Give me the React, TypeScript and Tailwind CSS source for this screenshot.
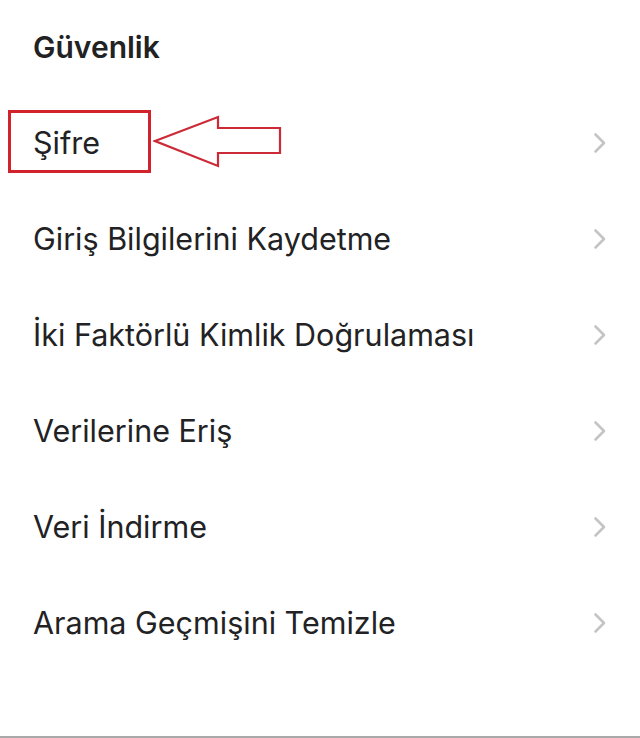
const items = [
    'Şifre',
    'Giriş Bilgilerini Kaydetme',
    'İki Faktörlü Kimlik Doğrulaması',
    'Verilerine Eriş',
    'Veri İndirme',
    'Arama Geçmişini Temizle',
];

// Kırmızı ok (işaretleme)
const Arrow = () => (
    <svg width="130" height="54" viewBox="0 0 130 54" className="absolute left-[153px] top-[20px]">
        <path
            d="M2 26 L65 2 L65 13 L127 13 L127 38 L65 38 L65 51 Z"
            fill="none"
            stroke="#cc2a36"
            strokeWidth="2.2"
            strokeLinejoin="miter"
        />
    </svg>
);

const Chevron = () => (
    <svg width="14" height="22" viewBox="0 0 14 22" className="shrink-0">
        <path d="M2.5 2.5 L11 11 L2.5 19.5" fill="none" stroke="#c4c4c7" strokeWidth="2.6" strokeLinecap="round" strokeLinejoin="round" />
    </svg>
);

export default function App() {
    return (
        <div className="h-[738px] w-[640px] bg-white border-b-2 border-[#a9a9a9] flex flex-col font-['Inter','Liberation_Sans',sans-serif] text-[#222224]">
            {/* Başlık */}
            <div className="h-[95px] flex items-center px-[33px]">
                <h1 className="text-[30px] font-semibold">Güvenlik</h1>
            </div>

            {/* Menü */}
            <ul className="flex flex-col">
                {items.map((label, i) => (
                    <li key={label} className="relative h-[96px] flex items-center justify-between pl-[33px] pr-[33px]">
                        <span className="text-[30.5px]">{label}</span>
                        <Chevron />
                        {i === 0 && (
                            <>
                                <div className="absolute left-[8px] top-[15px] w-[143px] h-[63px] border-[3px] border-[#d2232d]" />
                                <Arrow />
                            </>
                        )}
                    </li>
                ))}
            </ul>
        </div>
    );
}
